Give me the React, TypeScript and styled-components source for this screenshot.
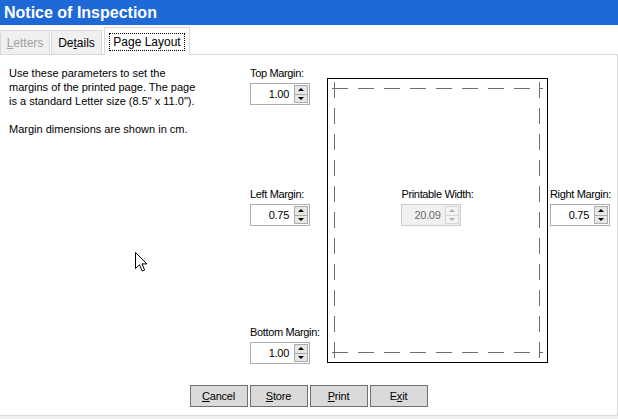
import styled, { createGlobalStyle } from "styled-components"

const GlobalStyle = createGlobalStyle`
  html, body {
    margin: 0;
    padding: 0;
    background: #fff;
  }
  body {
    font-family: "Liberation Sans", Arial, sans-serif;
  }
`

const Window = styled.div`
  position: relative;
  width: 618px;
  height: 419px;
  background: #f0f0f0;
  overflow: hidden;
  color: #000;
  font-family: "Liberation Sans", Arial, sans-serif;
`

const TitleBar = styled.div`
  height: 25px;
  padding-left: 4px;
  background: #1e69d6;
  color: #fff;
  font-size: 16px;
  font-weight: bold;
  line-height: 25px;
`

const TabStrip = styled.div`
  display: flex;
  align-items: flex-end;
  height: 30px;
  box-sizing: border-box;
  border-bottom: 1px solid #d9d9d9;
  background: #fff;
`

const Tab = styled.div<{ $active?: boolean; $disabled?: boolean; $gap: number; $width: number }>`
  position: relative;
  z-index: ${(p) => (p.$active ? 1 : 0)};
  display: flex;
  align-items: center;
  justify-content: center;
  box-sizing: border-box;
  width: ${(p) => p.$width}px;
  height: ${(p) => (p.$active ? 28 : 24)}px;
  margin-left: ${(p) => p.$gap}px;
  margin-bottom: ${(p) => (p.$active ? -1 : 0)}px;
  border: 1px solid #d9d9d9;
  border-bottom: none;
  background: ${(p) => (p.$active ? "#fff" : "#f0f0f0")};
  color: ${(p) => (p.$disabled ? "#a0a0a0" : "#000")};
  font-size: 12px;
  white-space: nowrap;
`

const FocusBox = styled.span`
  padding: 1px 3px;
  border: 1px dotted #000;
  line-height: 14px;
`

const Panel = styled.div`
  display: flex;
  flex-direction: column;
  height: 361px;
  box-sizing: border-box;
  background: #fff;
  border-right: 1px solid #d9d9d9;
  border-bottom: 1px solid #d9d9d9;
`

const MainRow = styled.div`
  display: flex;
  height: 310px;

  & > * {
    flex-shrink: 0;
  }
`

const Description = styled.div`
  width: 250px;
  box-sizing: border-box;
  padding: 11px 0 0 9px;
  font-size: 11px;
  line-height: 14px;

  p {
    margin: 0 0 14px;
  }
`

const SideColumn = styled.div<{ $gap?: number; $width: number }>`
  display: flex;
  flex-direction: column;
  align-items: flex-start;
  width: ${(p) => p.$width}px;
  margin-left: ${(p) => p.$gap ?? 0}px;
`

const Field = styled.div<{ $top: number }>`
  display: flex;
  flex-direction: column;
  gap: 3px;
  margin-top: ${(p) => p.$top}px;
`

const FieldLabel = styled.div`
  font-size: 11px;
  line-height: 14px;
  letter-spacing: -0.35px;
  white-space: nowrap;
`

const PageSheet = styled.div`
  position: relative;
  display: flex;
  justify-content: center;
  align-items: flex-start;
  width: 221px;
  height: 285px;
  margin-top: 23px;
  box-sizing: border-box;
  border: 1px solid #000;
`

const Guides = styled.svg`
  position: absolute;
  left: 0;
  top: 0;
`

const SpinBox = styled.div<{ $disabled?: boolean }>`
  display: flex;
  width: 60px;
  height: 22px;
  box-sizing: border-box;
  padding: 1px;
  border: 1px solid ${(p) => (p.$disabled ? "#cccccc" : "#adadad")};
  background: ${(p) => (p.$disabled ? "#f0f0f0" : "#fff")};
  position: relative;
`

const SpinValue = styled.div<{ $disabled?: boolean }>`
  flex: 1;
  padding-right: 5px;
  text-align: right;
  font-size: 11px;
  line-height: 18px;
  letter-spacing: -0.3px;
  color: ${(p) => (p.$disabled ? "#6d6d6d" : "#000")};
`

const SpinButtons = styled.div`
  display: flex;
  flex-direction: column;
  width: 14px;
`

const SpinButton = styled.div<{ $disabled?: boolean }>`
  flex: 1;
  display: flex;
  align-items: center;
  justify-content: center;
  box-sizing: border-box;
  border: 1px solid ${(p) => (p.$disabled ? "#d5d5d5" : "#acacac")};
  background: ${(p) => (p.$disabled ? "#f4f4f4" : "#e6e6e6")};

  & + & {
    margin-top: -1px;
  }
`

const Arrow = styled.span<{ $dir: "up" | "down"; $disabled?: boolean }>`
  width: 0;
  height: 0;
  border-left: 3px solid transparent;
  border-right: 3px solid transparent;
  ${(p) => (p.$dir === "up" ? "border-bottom" : "border-top")}: 3px solid
    ${(p) => (p.$disabled ? "#b0b0b0" : "#000")};
`

const ButtonRow = styled.div`
  display: flex;
  justify-content: center;
  gap: 2px;
  margin-top: 20px;
`

const PushButton = styled.button`
  width: 58px;
  height: 22px;
  box-sizing: border-box;
  padding: 0;
  border: 1px solid #707070;
  background: #dadada;
  color: #000;
  font-family: "Liberation Sans", Arial, sans-serif;
  font-size: 11px;
  letter-spacing: -0.2px;
`

const Cursor = styled.svg`
  position: absolute;
  left: 135px;
  top: 252px;
`

function Spinner({ value, disabled }: { value: string; disabled?: boolean }) {
  return (
    <SpinBox $disabled={disabled}>
      <SpinValue $disabled={disabled}>{value}</SpinValue>
      <SpinButtons>
        <SpinButton $disabled={disabled}>
          <Arrow $dir="up" $disabled={disabled} />
        </SpinButton>
        <SpinButton $disabled={disabled}>
          <Arrow $dir="down" $disabled={disabled} />
        </SpinButton>
      </SpinButtons>
    </SpinBox>
  )
}

export default function App() {
  return (
    <Window>
      <GlobalStyle />
      <TitleBar>Notice of Inspection</TitleBar>
      <TabStrip>
        <Tab $gap={0} $width={50} $disabled>
          <span>
            <u>L</u>etters
          </span>
        </Tab>
        <Tab $gap={1} $width={51}>
          <span>
            De<u>t</u>ails
          </span>
        </Tab>
        <Tab $gap={2} $width={86} $active>
          <FocusBox>
            Pa<u>g</u>e Layout
          </FocusBox>
        </Tab>
      </TabStrip>
      <Panel>
        <MainRow>
          <Description>
            <p>
              Use these parameters to set the
              <br />
              margins of the printed page. The page
              <br />
              is a standard Letter size (8.5" x 11.0").
            </p>
            <p>Margin dimensions are shown in cm.</p>
          </Description>
          <SideColumn $width={77}>
            <Field $top={11}>
              <FieldLabel>Top Margin:</FieldLabel>
              <Spinner value="1.00" />
            </Field>
            <Field $top={82}>
              <FieldLabel>Left Margin:</FieldLabel>
              <Spinner value="0.75" />
            </Field>
            <Field $top={99}>
              <FieldLabel>Bottom Margin:</FieldLabel>
              <Spinner value="1.00" />
            </Field>
          </SideColumn>
          <PageSheet>
            <Guides width="219" height="283" viewBox="0 0 219 283">
              <g stroke="#6e6e6e" strokeWidth="1" strokeDasharray="16 10" fill="none">
                <line x1="4" y1="9.5" x2="215" y2="9.5" />
                <line x1="4" y1="273.5" x2="215" y2="273.5" />
                <line x1="6.5" y1="3" x2="6.5" y2="280" />
                <line x1="211.5" y1="3" x2="211.5" y2="280" />
              </g>
            </Guides>
            <Field $top={108}>
              <FieldLabel>Printable Width:</FieldLabel>
              <Spinner value="20.09" disabled />
            </Field>
          </PageSheet>
          <SideColumn $gap={2} $width={67}>
            <Field $top={132}>
              <FieldLabel>Right Margin:</FieldLabel>
              <Spinner value="0.75" />
            </Field>
          </SideColumn>
        </MainRow>
        <ButtonRow>
          <PushButton>
            <u>C</u>ancel
          </PushButton>
          <PushButton>
            <u>S</u>tore
          </PushButton>
          <PushButton>
            <u>P</u>rint
          </PushButton>
          <PushButton>
            E<u>x</u>it
          </PushButton>
        </ButtonRow>
      </Panel>
      <Cursor width="13" height="21" viewBox="0 0 13 21">
        <path
          d="M0.5 0.5 L0.5 16.5 L4.5 12.8 L7.2 19 L9.6 18 L7 11.9 L12 11.9 Z"
          fill="#fff"
          stroke="#000"
          strokeWidth="1"
          strokeLinejoin="miter"
        />
      </Cursor>
    </Window>
  )
}
